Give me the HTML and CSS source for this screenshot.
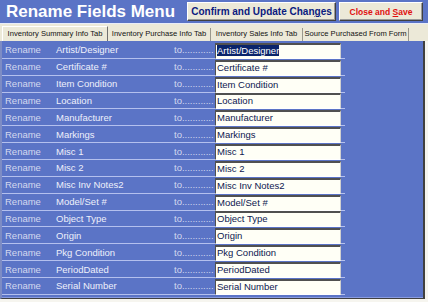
FILE: index.html
```html
<!doctype html>
<html lang="en-us">
	<head>
		<meta charset="utf-8">
		<title>Rename Fields Menu</title>
		<link rel="stylesheet" href="styles.css">
	</head>
	<body>
		<div class="head">
			<h1>Rename Fields Menu</h1>
			<div class="actions">
				<button class="btn confirm">Confirm and Update Chan<u>g</u>es</button>
				<button class="btn close">Close and <u>S</u>ave</button>
			</div>
		</div>
		<div class="tabs">
			<span class="tab tab-1 current">Inventory Summary Info Tab</span>
			<span class="tab tab-2">Inventory Purchase Info Tab</span>
			<span class="tab tab-3">Inventory Sales Info Tab</span>
			<span class="tab tab-4">Source Purchased From Form</span>
		</div>
		<div class="panel">
			<div class="row"><span class="lbl">Rename</span><span class="name">Artist/Designer</span><span class="to">to............</span><span class="box"><span class="sel">Artist/Designer</span></span></div>
			<div class="row"><span class="lbl">Rename</span><span class="name">Certificate #</span><span class="to">to............</span><span class="box">Certificate #</span></div>
			<div class="row"><span class="lbl">Rename</span><span class="name">Item Condition</span><span class="to">to............</span><span class="box">Item Condition</span></div>
			<div class="row"><span class="lbl">Rename</span><span class="name">Location</span><span class="to">to............</span><span class="box">Location</span></div>
			<div class="row"><span class="lbl">Rename</span><span class="name">Manufacturer</span><span class="to">to............</span><span class="box">Manufacturer</span></div>
			<div class="row"><span class="lbl">Rename</span><span class="name">Markings</span><span class="to">to............</span><span class="box">Markings</span></div>
			<div class="row"><span class="lbl">Rename</span><span class="name">Misc 1</span><span class="to">to............</span><span class="box">Misc 1</span></div>
			<div class="row"><span class="lbl">Rename</span><span class="name">Misc 2</span><span class="to">to............</span><span class="box">Misc 2</span></div>
			<div class="row"><span class="lbl">Rename</span><span class="name">Misc Inv Notes2</span><span class="to">to............</span><span class="box">Misc Inv Notes2</span></div>
			<div class="row"><span class="lbl">Rename</span><span class="name">Model/Set #</span><span class="to">to............</span><span class="box">Model/Set #</span></div>
			<div class="row"><span class="lbl">Rename</span><span class="name">Object Type</span><span class="to">to............</span><span class="box">Object Type</span></div>
			<div class="row"><span class="lbl">Rename</span><span class="name">Origin</span><span class="to">to............</span><span class="box">Origin</span></div>
			<div class="row"><span class="lbl">Rename</span><span class="name">Pkg Condition</span><span class="to">to............</span><span class="box">Pkg Condition</span></div>
			<div class="row"><span class="lbl">Rename</span><span class="name">PeriodDated</span><span class="to">to............</span><span class="box">PeriodDated</span></div>
			<div class="row"><span class="lbl">Rename</span><span class="name">Serial Number</span><span class="to">to............</span><span class="box">Serial Number</span></div>
		</div>
	</body>
</html>
```
FILE: styles.css
```css
html, body {
	margin: 0;
	background-color: #f6f5ef;
	font-family: "Liberation Sans", Arial, sans-serif;
}
.head {
	height: 23px;
	background-color: #5b74c6;
	display: flex;
	align-items: flex-start;
	padding: 0 5px 0 6px;
}
h1 {
	margin: 1px 0 0 0;
	color: #fff;
	font-size: 17px;
	font-weight: bold;
	line-height: 22px;
}
.actions {
	margin-left: auto;
	display: flex;
	gap: 3px;
	padding-top: 2px;
}
.btn {
	height: 19px;
	padding: 0;
	background-color: #ece9d8;
	border: 1px solid;
	border-color: #fff #404040 #404040 #fff;
	box-shadow: inset -1px -1px 0 #9a9a9a;
	font-family: "Liberation Sans", Arial, sans-serif;
	font-weight: bold;
}
.confirm {
	width: 149px;
	color: #0a1a80;
	font-size: 10px;
}
.close {
	width: 84px;
	color: #e01010;
	font-size: 8.5px;
}
.tabs {
	height: 17px;
	border-top: 1px solid #e8ecf8;
	background-color: #ece9d8;
	display: flex;
	align-items: flex-end;
	padding-left: 2px;
}
.tab {
	height: 13px;
	box-sizing: border-box;
	border-right: 1px solid #9a988c;
	font-size: 7.6px;
	line-height: 12px;
	color: #111;
	text-align: center;
	white-space: nowrap;
}
.tab.current {
	height: 15px;
	border-top: 1px solid #fff;
	border-left: 1px solid #fff;
	border-right: 1px solid #707070;
	line-height: 13px;
}
.tab-1 { width: 106px; }
.tab-2 { width: 103px; }
.tab-3 { width: 92px; }
.tab-4 { width: 106px; }
.panel {
	width: 421px;
	height: 256px;
	background-color: #5b74c6;
	border-left: 2px solid #7d8cc4;
	border-right: 2px solid #404040;
	border-bottom: 1px solid #404040;
	box-shadow: inset 0 -1px 0 #8a9ce0;
	padding-top: 1px;
}
.row {
	width: max-content;
	height: 16.86px;
	box-sizing: border-box;
	display: grid;
	grid-template-columns: 51px 118px 41px 126px 4px;
	align-items: center;
	padding-left: 3px;
	border-bottom: 1px solid #b4c0ee;
	font-size: 9.5px;
	white-space: nowrap;
}
.lbl, .to {
	color: #d4d9ef;
}
.name {
	color: #eef0fb;
}
.to {
	overflow: hidden;
}
.box {
	align-self: end;
	margin-bottom: -1px;
	height: 16px;
	box-sizing: border-box;
	background-color: #fffff6;
	border-top: 2px solid #505050;
	border-left: 1px solid #505050;
	border-right: 1px solid #d0d0d0;
	border-bottom: 1px solid #fff;
	padding-left: 1px;
	line-height: 12px;
	color: #0d1850;
	overflow: hidden;
}
.sel {
	background-color: #0a246a;
	color: #fff;
}
```
